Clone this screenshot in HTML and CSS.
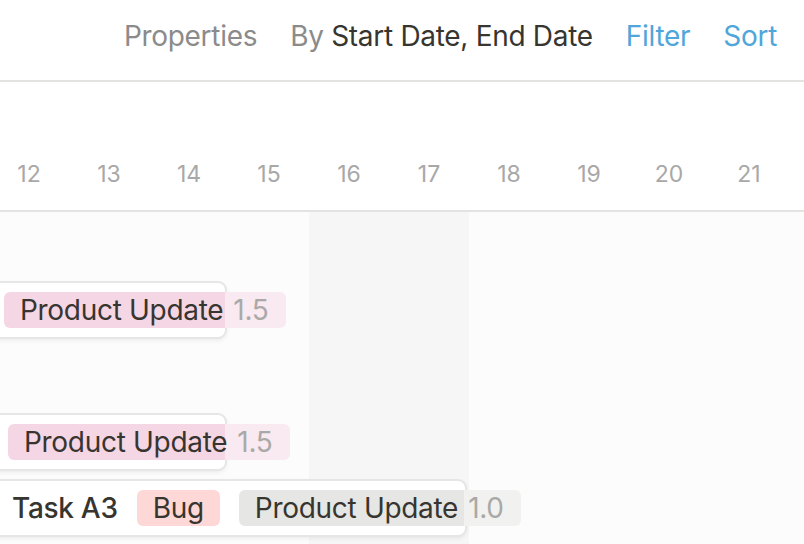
FILE: index.html
```html
<!DOCTYPE html>
<html>

<head>
    <title>Timeline</title>
    <link rel="stylesheet" href="styles.css">
</head>

<body>
    <div class="topbar">
        <span class="menu-item muted">Properties</span>
        <span class="menu-item"><span class="muted">By</span> Start Date, End Date</span>
        <span class="menu-item link">Filter</span>
        <span class="menu-item link">Sort</span>
    </div>

    <div class="timeline">
        <div class="days">
            <div class="day">12</div>
            <div class="day">13</div>
            <div class="day">14</div>
            <div class="day">15</div>
            <div class="day">16</div>
            <div class="day">17</div>
            <div class="day">18</div>
            <div class="day">19</div>
            <div class="day">20</div>
            <div class="day">21</div>
        </div>

        <div class="board">
            <div class="columns">
                <div class="column"></div>
                <div class="column"></div>
                <div class="column"></div>
                <div class="column"></div>
                <div class="column weekend"></div>
                <div class="column weekend"></div>
                <div class="column"></div>
                <div class="column"></div>
                <div class="column"></div>
                <div class="column"></div>
                <div class="column"></div>
            </div>

            <div class="card card-one">
                <span class="tag tag-pink tag-cut-one">Product Update <span class="tag-num">1.5</span></span>
            </div>

            <div class="card card-two">
                <span class="tag tag-pink tag-cut-two">Product Update <span class="tag-num">1.5</span></span>
            </div>

            <div class="card card-three">
                <span class="card-title">Task A3</span>
                <span class="tag tag-red">Bug</span>
                <span class="tag tag-grey tag-cut-three">Product Update <span class="tag-num">1.0</span></span>
            </div>
        </div>
    </div>
</body>

</html>
```

FILE: styles.css
```css
body {
    margin: 0;
    width: 804px;
    height: 544px;
    overflow: hidden;
    background: #fff;
    font-family: Inter, "Noto Sans", sans-serif;
    color: #37352f;
}

.topbar {
    height: 82px;
    box-sizing: border-box;
    display: flex;
    justify-content: flex-end;
    align-items: center;
    gap: 33px;
    padding-right: 27px;
    padding-bottom: 9px;
    border-bottom: 2px solid #e3e3e2;
    font-size: 28px;
    letter-spacing: -0.3px;
}

.menu-item {
    white-space: nowrap;
}

.muted {
    color: #8b8b8b;
}

.link {
    color: #4fa6db;
}

.days {
    display: flex;
    align-items: flex-end;
    margin-left: -11px;
    height: 130px;
    box-sizing: border-box;
    padding-bottom: 22px;
    border-bottom: 2px solid #e3e3e2;
}

.day {
    flex: 0 0 80px;
    text-align: center;
    font-size: 23px;
    line-height: 28px;
    color: #a8a8a8;
}

.board {
    position: relative;
    height: 332px;
    overflow: hidden;
}

.columns {
    display: flex;
    height: 100%;
    margin-left: -11px;
}

.column {
    flex: 0 0 80px;
    background: #fcfcfc;
}

.weekend {
    background: #f6f6f6;
}

.card {
    position: absolute;
    height: 58px;
    box-sizing: border-box;
    display: flex;
    align-items: center;
    gap: 20px;
    background: #fff;
    border: 2px solid #e6e6e5;
    border-radius: 9px;
    box-shadow: 0 2px 4px rgba(15, 15, 15, 0.06);
    white-space: nowrap;
    font-size: 28px;
    letter-spacing: -0.3px;
}

.card-one {
    left: -60px;
    top: 69px;
    width: 287px;
    padding-left: 62px;
}

.card-two {
    left: -60px;
    top: 201px;
    width: 287px;
    padding-left: 66px;
}

.card-three {
    left: -60px;
    top: 267px;
    width: 527px;
    padding-left: 70px;
    gap: 19px;
}

.card-title {
    font-weight: 500;
}

.tag {
    height: 36px;
    box-sizing: border-box;
    display: inline-flex;
    align-items: center;
    padding: 0 16px;
    border-radius: 6px;
    color: #37352f;
}

.tag-num {
    margin-left: 10px;
    color: #aaa9a7;
}

.tag-red {
    background: #fdd8d6;
}

.tag-pink {
    padding-right: 17px;
}

.tag-cut-one {
    background: linear-gradient(to right, #f5d6e5 0 221px, #f9eaf1 221px);
}

.tag-cut-two {
    background: linear-gradient(to right, #f5d6e5 0 217px, #f9eaf1 217px);
}

.tag-grey {
    padding-right: 17px;
}

.tag-cut-three {
    background: linear-gradient(to right, #e6e6e4 0 225px, #f1f1f0 225px);
}
```
